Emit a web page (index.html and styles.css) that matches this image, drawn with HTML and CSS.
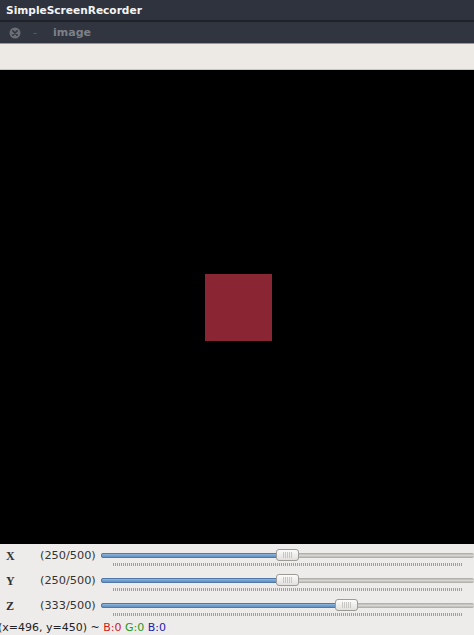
FILE: index.html
```html
<!DOCTYPE html>
<html>
<head>
<meta charset="utf-8">
<link rel="stylesheet" href="styles.css">
</head>
<body>
<div class="window">
  <div class="titlebar">SimpleScreenRecorder</div>
  <div class="tabbar">
    <span class="close-icon">
      <svg width="12" height="12" viewBox="0 0 12 12"><circle cx="6" cy="6" r="5.5" fill="#6b6e75"/><path d="M3.8 3.8 L8.2 8.2 M8.2 3.8 L3.8 8.2" stroke="#30343e" stroke-width="1.6" stroke-linecap="round"/></svg>
    </span>
    <span class="dash">-</span>
    <span class="tab-title">image</span>
  </div>
  <div class="toolbar"></div>
  <div class="canvas">
    <div class="square"></div>
  </div>
  <div class="controls">
    <div class="row">
      <span class="label">X</span>
      <span class="value">(250/500)</span>
      <div class="slider">
        <div class="track"><div class="fill" style="width:186px"></div><div class="handle" style="left:175px"><span class="grip"></span></div></div>
        <div class="ticks"></div>
      </div>
    </div>
    <div class="row">
      <span class="label">Y</span>
      <span class="value">(250/500)</span>
      <div class="slider">
        <div class="track"><div class="fill" style="width:186px"></div><div class="handle" style="left:175px"><span class="grip"></span></div></div>
        <div class="ticks"></div>
      </div>
    </div>
    <div class="row">
      <span class="label">Z</span>
      <span class="value">(333/500)</span>
      <div class="slider">
        <div class="track"><div class="fill" style="width:245px"></div><div class="handle" style="left:234px"><span class="grip"></span></div></div>
        <div class="ticks"></div>
      </div>
    </div>
    <div class="status">(x=496, y=450) ~ <span class="r">B:0</span> <span class="g">G:0</span> <span class="b">B:0</span></div>
  </div>
</div>
</body>
</html>
```
FILE: styles.css
```css
html, body {
  margin: 0;
  padding: 0;
  background: #000;
}
body {
  width: 474px;
  height: 635px;
  overflow: hidden;
}
.window {
  display: flex;
  flex-direction: column;
  width: 474px;
  height: 635px;
  overflow: hidden;
}
.titlebar {
  height: 20px;
  background: #2f333d;
  color: #f4f4f4;
  font-family: "DejaVu Sans", sans-serif;
  font-weight: bold;
  font-size: 10.6px;
  line-height: 20px;
  padding-left: 6px;
  box-sizing: border-box;
}
.tabbar {
  height: 23px;
  box-sizing: border-box;
  background: #31353f;
  border-top: 2px solid #1f2229;
  display: flex;
  align-items: center;
  padding-left: 9px;
  font-family: "DejaVu Sans", sans-serif;
  font-size: 11px;
  font-weight: bold;
  color: #7c8088;
}
.close-icon {
  display: flex;
  width: 12px;
  height: 12px;
}
.dash {
  margin-left: 12px;
  font-weight: normal;
  color: #5c6068;
}
.tab-title {
  margin-left: 16px;
}
.toolbar {
  height: 27px;
  box-sizing: border-box;
  background: #ede9e5;
  border-top: 1px solid #9a9894;
  border-bottom: 1px solid #c9c6c2;
}
.canvas {
  height: 474px;
  background: #000;
  display: flex;
  align-items: center;
  justify-content: center;
}
.square {
  width: 67px;
  height: 67px;
  background: #8a2634;
  margin-left: 2px;
}
.controls {
  flex: 1;
  background: #eeecea;
  padding-top: 2px;
  font-family: "DejaVu Sans", sans-serif;
  font-size: 11px;
  color: #222;
}
.row {
  height: 25px;
  display: flex;
  align-items: flex-start;
}
.label {
  width: 40px;
  padding-left: 6px;
  box-sizing: border-box;
  line-height: 20px;
  font-family: "Liberation Serif", serif;
  font-weight: bold;
  font-size: 12px;
  color: #333;
}
.value {
  width: 61px;
  line-height: 20px;
  color: #333;
  font-size: 11.3px;
}
.slider {
  width: 373px;
  padding-top: 7px;
  display: flex;
  flex-direction: column;
}
.track {
  position: relative;
  height: 5px;
  box-sizing: border-box;
  background: linear-gradient(#a9a7a3, #d8d6d2 50%, #a9a7a3);
  border-radius: 2px;
}
.fill {
  height: 5px;
  box-sizing: border-box;
  border: 1px solid #4f79a8;
  border-radius: 2px;
  background: linear-gradient(#8fb5dc, #5f8fc2);
}
.handle {
  position: absolute;
  top: -4px;
  width: 23px;
  height: 12px;
  box-sizing: border-box;
  border: 1px solid #9d9b97;
  border-radius: 3px;
  background: linear-gradient(#fbfbfa, #e2e0dd);
  display: flex;
  justify-content: center;
  align-items: center;
}
.grip {
  width: 9px;
  height: 6px;
  background: repeating-linear-gradient(90deg, #c8c6c2 0 1px, transparent 1px 2px);
}
.ticks {
  margin: 5px 12px 0 12px;
  height: 3px;
  background: repeating-linear-gradient(90deg, #8d8b88 0 1px, transparent 1px 2px);
  opacity: 0.8;
}
.status {
  line-height: 13px;
  margin-left: -2px;
  color: #222;
}
.r { color: #d21a1a; }
.g { color: #1e9a1e; }
.b { color: #1c1cb0; }
```
